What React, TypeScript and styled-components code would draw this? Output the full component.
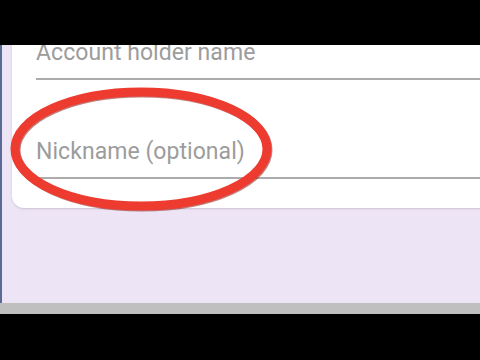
import React from "react";
import styled, { createGlobalStyle } from "styled-components";

const Global = createGlobalStyle`
  html, body { margin: 0; padding: 0; background: #000; }
  body { width: 480px; height: 360px; overflow: hidden; font-family: Roboto, "Noto Sans", Arial, sans-serif; }
`;

const Page = styled.div`
  position: relative;
  width: 480px;
  height: 360px;
  display: flex;
  flex-direction: column;
  background: #000;
`;

const Letterbox = styled.div<{ $h: number }>`
  height: ${(p) => p.$h}px;
  flex: none;
  background: #000;
`;

const Screen = styled.div`
  flex: 1;
  display: flex;
  overflow: hidden;
  background: #ede5f5;
`;

const EdgeStrip = styled.div`
  width: 2px;
  flex: none;
  background: #5a6b98;
`;

const Main = styled.div`
  flex: 1;
  padding-left: 10px;
  display: flex;
  flex-direction: column;
`;

const Card = styled.div`
  margin-top: -6px;
  margin-right: -20px;
  background: #fff;
  border-radius: 0 0 12px 12px;
  box-shadow: 0 1px 2px rgba(80, 60, 100, 0.22);
  padding: 0 0 29px 24px;
  display: flex;
  flex-direction: column;
  gap: 58px;
`;

const Field = styled.div`
  display: flex;
  flex-direction: column;
`;

const Label = styled.div`
  font-size: 23px;
  line-height: 28px;
  color: #9c9c9c;
  letter-spacing: 0.05px;
`;

const Underline = styled.div`
  margin-top: 11px;
  height: 2px;
  background: #acacac;
`;

const NavBar = styled.div`
  height: 11px;
  flex: none;
  background: #bfbfbf;
`;

const Annotation = styled.svg`
  position: absolute;
  left: 0;
  top: 0;
  pointer-events: none;
`;

export default function App() {
  return (
    <>
      <Global />
      <Page>
        <Letterbox $h={45} />
        <Screen>
          <EdgeStrip />
          <Main>
            <Card>
              <Field>
                <Label>Account holder name</Label>
                <Underline />
              </Field>
              <Field>
                <Label>Nickname (optional)</Label>
                <Underline />
              </Field>
            </Card>
          </Main>
        </Screen>
        <NavBar />
        <Letterbox $h={46} />
        <Annotation width="480" height="360" viewBox="0 0 480 360">
          <ellipse cx="142" cy="150" rx="126" ry="57" fill="none" stroke="#8a1c16" strokeOpacity="0.55" strokeWidth="9" />
          <ellipse cx="141" cy="149" rx="126" ry="57" fill="none" stroke="#ee3b30" strokeWidth="9" />
        </Annotation>
      </Page>
    </>
  );
}
